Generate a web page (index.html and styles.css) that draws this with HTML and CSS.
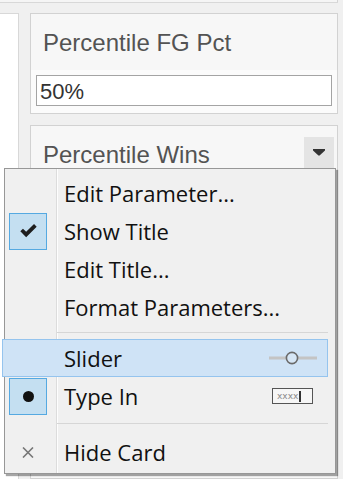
FILE: index.html
```html
<!DOCTYPE html>
<html>
<head>
<meta charset="utf-8">
<link rel="stylesheet" href="styles.css">
</head>
<body>
<div class="top"><div class="top-card"></div></div>
<div class="main">
  <div class="side"></div>
  <div class="cards">
    <div class="card">
      <div class="card-title">Percentile FG Pct</div>
      <div class="card-body"><div class="input">50%</div></div>
    </div>
    <div class="card card2">
      <div class="card-head">
        <div class="card-title">Percentile Wins</div>
        <div class="dd"><svg width="12" height="7" viewBox="0 0 12 7"><polygon points="0,0 12,0 12,1.6 6.6,6.6 5.4,6.6 0,1.6" fill="#333"/></svg></div>
      </div>
    </div>
  </div>
</div>
<div class="menu">
  <div class="item"><div class="icon"></div><div class="label">Edit Parameter...</div></div>
  <div class="item"><div class="icon"><div class="box"><svg width="17" height="14" viewBox="0 0 16 13"><polygon points="0.3,6.8 2.8,4.3 5.8,7.3 13.2,0 15.7,2.5 5.8,12.4" fill="#1e1e1e"/></svg></div></div><div class="label">Show Title</div></div>
  <div class="item"><div class="icon"></div><div class="label">Edit Title...</div></div>
  <div class="item"><div class="icon"></div><div class="label">Format Parameters...</div></div>
  <div class="sep sep1"></div>
  <div class="item hl"><div class="icon"></div><div class="label">Slider</div>
    <div class="slider-ic"><svg width="48" height="14" viewBox="0 0 48 14"><line x1="0" y1="7" x2="48" y2="7" stroke="#c4c4c4" stroke-width="3"/><circle cx="23" cy="7" r="5.6" fill="#d6e6f5" stroke="#6a6a6a" stroke-width="1.6"/></svg></div>
  </div>
  <div class="item"><div class="icon"><div class="box"><div class="dot"></div></div></div><div class="label">Type In</div>
    <div class="typein"><span class="xs">xxxx</span><span class="cursor"></span></div>
  </div>
  <div class="sep sep2"></div>
  <div class="item"><div class="icon"><svg width="12" height="11" viewBox="0 0 12 11"><path d="M1 0.5 L11 10.5 M11 0.5 L1 10.5" stroke="#777" stroke-width="1.6"/></svg></div><div class="label">Hide Card</div></div>
</div>
</body>
</html>
```
FILE: styles.css
```css
html, body {
  margin: 0;
  padding: 0;
}
body {
  background: #f0f0f0;
  width: 343px;
  height: 479px;
  overflow: hidden;
  position: relative;
  font-family: "Liberation Sans", Arial, sans-serif;
}
.top {
  height: 2px;
  border-bottom: 1px solid #d8d8d8;
  background: #f5f5f5;
  width: 338px;
  display: flex;
  justify-content: flex-end;
}
.top-card {
  width: 308px;
  border-right: 1px solid #d4d4d4;
  box-sizing: border-box;
}
.main {
  margin-top: 10px;
  display: flex;
}
.side {
  width: 18px;
  height: 465px;
  background: #fff;
  border-right: 1px solid #d8d8d8;
  border-top: 1px solid #d8d8d8;
}
.cards {
  margin-left: 11px;
  width: 308px;
}
.card {
  border: 1px solid #d2d2d2;
  background: #f7f7f7;
}
.card-title {
  font-size: 24px;
  line-height: 28px;
  color: #535353;
  padding: 15px 12px 13px;
  white-space: nowrap;
}
.card-body {
  background: #fbfbfb;
  padding: 5px 5px 7px;
}
.input {
  height: 29px;
  border: 1px solid #a4a4a4;
  background: #fff;
  font-size: 22px;
  line-height: 32px;
  color: #333;
  padding-left: 3px;
}
.card2 {
  margin-top: 11px;
  height: 352px;
}
.card-head {
  display: flex;
  justify-content: space-between;
  align-items: flex-start;
}
.dd {
  width: 30px;
  height: 34px;
  margin-top: 11px;
  margin-right: 3px;
  background: #e4e4e4;
  display: flex;
  justify-content: center;
  padding-top: 12px;
  box-sizing: border-box;
}
.menu {
  position: absolute;
  left: 4px;
  top: 168px;
  width: 332px;
  box-sizing: border-box;
  border: 1px solid #979797;
  background: #f0f0f0 linear-gradient(to right, transparent 51px, #dcdcdc 51px, #dcdcdc 52px, #fdfdfd 52px, #fdfdfd 53px, transparent 53px);
  padding: 5px 0 2px;
  box-shadow: 2px 2px 1px rgba(0, 0, 0, 0.35);
  font-family: "Open Sans", "Liberation Sans", sans-serif;
}
.item {
  height: 38px;
  display: flex;
  align-items: center;
}
.icon {
  width: 51px;
  height: 38px;
  flex: none;
  display: flex;
  align-items: center;
  justify-content: center;
}
.box {
  width: 38px;
  height: 37px;
  margin-left: 4px;
  box-sizing: border-box;
  margin-right: 9px;
  background: #c4dff1;
  border: 1px solid #55a9e1;
  display: flex;
  align-items: center;
  justify-content: center;
}
.icon svg {
  margin-left: -6px;
}
.box svg {
  margin-left: 0;
}
.dot {
  width: 11px;
  height: 11px;
  border-radius: 50%;
  background: #111;
}
.label {
  flex: 1;
  padding-left: 8px;
  font-size: 22px;
  color: #111;
  white-space: nowrap;
}
.hl {
  margin-left: -3px;
  margin-right: 7px;
  background: #cfe3f6;
  border: 1px solid #95c4ee;
  box-sizing: border-box;
}
.hl .icon {
  width: 53px;
}
.slider-ic {
  margin-right: 10px;
  display: flex;
}
.typein {
  width: 41px;
  height: 16px;
  box-sizing: border-box;
  border: 1.5px solid #555;
  background: #f6f6f6;
  margin-right: 22px;
  display: flex;
  align-items: center;
  padding-left: 4px;
}
.xs {
  font-family: "DejaVu Sans", sans-serif;
  font-size: 9px;
  line-height: 10px;
  color: #8a8a8a;
}
.cursor {
  width: 1.5px;
  height: 11px;
  background: #333;
  margin-left: 1px;
}
.sep {
  margin-left: 52px;
  margin-right: 7px;
  border-top: 1px solid #d6d6d6;
}
.sep1 {
  margin-top: 6px;
  margin-bottom: 6px;
}
.sep2 {
  margin-top: 8px;
  margin-bottom: 9px;
}
```
